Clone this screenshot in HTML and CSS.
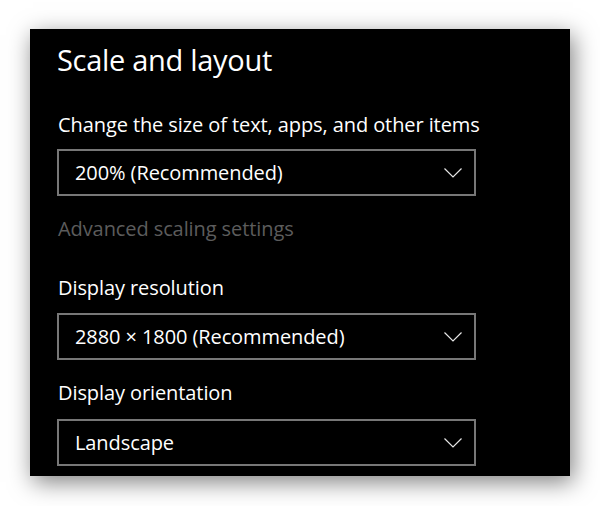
FILE: index.html
```html
<!DOCTYPE html>
<html>
<head>
<meta charset="utf-8">
<link rel="stylesheet" href="styles.css">
</head>
<body>
<div class="panel">
  <h1 class="title">Scale and layout</h1>
  <div class="label l1">Change the size of text, apps, and other items</div>
  <div class="select s1"><span>200% (Recommended)</span><svg class="chev" width="18" height="10" viewBox="0 0 18 10"><path d="M0.5 0.5 L9 9 L17.5 0.5" fill="none" stroke="#e6e6e6" stroke-width="1.2"/></svg></div>
  <div class="label link">Advanced scaling settings</div>
  <div class="label l3">Display resolution</div>
  <div class="select s2"><span>2880 × 1800 (Recommended)</span><svg class="chev" width="18" height="10" viewBox="0 0 18 10"><path d="M0.5 0.5 L9 9 L17.5 0.5" fill="none" stroke="#e6e6e6" stroke-width="1.2"/></svg></div>
  <div class="label l4">Display orientation</div>
  <div class="select s3"><span>Landscape</span><svg class="chev" width="18" height="10" viewBox="0 0 18 10"><path d="M0.5 0.5 L9 9 L17.5 0.5" fill="none" stroke="#e6e6e6" stroke-width="1.2"/></svg></div>
</div>
</body>
</html>
```
FILE: styles.css
```css
html, body { margin: 0; padding: 0; background: #fff; }
body { width: 600px; height: 506px; overflow: hidden; font-family: "Open Sans", "Noto Sans", sans-serif; }
.panel {
  margin: 29px 0 0 30px;
  width: 540px;
  height: 447px;
  box-sizing: border-box;
  background: #000;
  color: #fff;
  padding: 11px 0 0 27px;
  display: flex;
  flex-direction: column;
  box-shadow: 3px 6px 22px rgba(0,0,0,0.5);
}
.title { margin: 0; font-size: 29px; font-weight: 400; line-height: 40px; letter-spacing: -0.3px; }
.label { font-size: 20px; line-height: 28px; padding-left: 1px; letter-spacing: -0.09px; }
.l1 { margin-top: 31px; }
.link { color: #5c5c5c; margin-top: 19px; }
.l3 { margin-top: 31px; }
.l4 { margin-top: 19px; }
.select {
  width: 419px;
  height: 47px;
  box-sizing: border-box;
  border: 2px solid #777;
  display: flex;
  align-items: center;
  justify-content: space-between;
  padding: 0 12px 0 16px;
  font-size: 20px;
  line-height: 28px;
  letter-spacing: -0.09px;
}
.s1 { margin-top: 10px; }
.s2 { margin-top: 11px; }
.s3 { margin-top: 12px; }
.chev { display: block; margin-top: 1px; }
```
